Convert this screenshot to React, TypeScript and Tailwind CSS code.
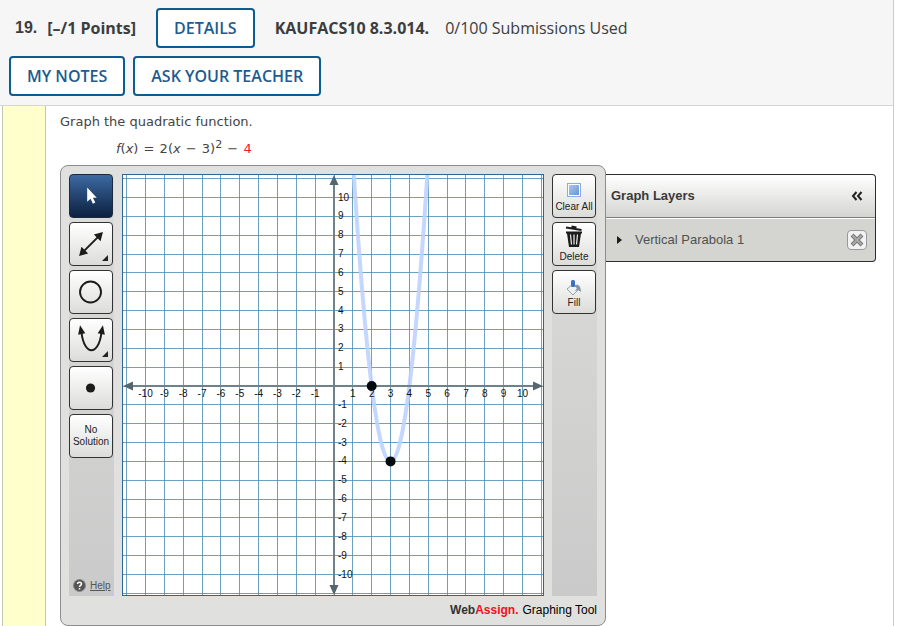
import type { ReactNode } from "react";

const UNIT = 18.85;
const CENTER = 212;
const SIZE = 422;
const px = (v: number) => CENTER + v * UNIT;
const py = (v: number) => CENTER - v * UNIT;
const ticks = Array.from({ length: 23 }, (_, i) => i - 11);
const labels = ticks.filter((t) => t !== 0 && Math.abs(t) <= 10);

function HeaderButton({ children }: { children: ReactNode }) {
  return (
    <button
      type="button"
      className="h-10 rounded border-2 border-[#0b5c91] bg-white px-4 text-base font-semibold text-[#1d5b90]"
    >
      {children}
    </button>
  );
}

function ToolButton({ label, active, children }: { label: string; active?: boolean; children: ReactNode }) {
  return (
    <button
      type="button"
      aria-label={label}
      className={`relative flex h-11 w-11 flex-col items-center justify-center rounded border text-[10px] leading-3 ${
        active
          ? "border-[#1c2a3c] bg-linear-to-b from-[#3d6aa3] to-[#0d2140]"
          : "border-[#333] bg-linear-to-b from-white to-[#dcddda] text-[#222]"
      }`}
    >
      {children}
    </button>
  );
}

function Corner() {
  return (
    <svg className="absolute right-1 bottom-1 h-1.5 w-1.5" viewBox="0 0 6 6" aria-hidden="true">
      <path d="M6 0V6H0Z" fill="#222" />
    </svg>
  );
}

function Plot() {
  return (
    <svg width={SIZE} height={SIZE} className="block shrink-0 bg-white" role="img" aria-label="Coordinate plane">
      <g stroke="#4a88b0" strokeWidth="1" strokeOpacity="0.8">
        {ticks.map((t) => (
          <g key={t}>
            <line x1={Math.floor(px(t)) + 0.5} x2={Math.floor(px(t)) + 0.5} y1="0" y2={SIZE} />
            <line y1={Math.floor(py(t)) + 0.5} y2={Math.floor(py(t)) + 0.5} x1="0" x2={SIZE} />
          </g>
        ))}
      </g>
      <path
        d={`M${px(1)} ${py(12)}Q${px(3)} ${py(-20)} ${px(5)} ${py(12)}`}
        fill="none"
        stroke="#bcd3ff"
        strokeOpacity="0.9"
        strokeWidth="4"
      />
      <g stroke="#6f828b" strokeWidth="2">
        <line x1="6" x2={SIZE - 6} y1={CENTER} y2={CENTER} />
        <line y1="6" y2={SIZE - 6} x1={CENTER} x2={CENTER} />
      </g>
      <g fill="#56666e">
        <path d="M1 212l10-4.500v9z" />
        <path d="M421 212l-10-4.500v9z" />
        <path d="M212 1l-4.500 10h9z" />
        <path d="M212 421l-4.500-10h9z" />
      </g>
      <circle cx={px(2)} cy={py(0)} r="5" fill="#050a0d" />
      <circle cx={px(3)} cy={py(-4)} r="5" fill="#050a0d" />
      <g fontSize="10" fill="#111">
        {labels.map((t) => (
          <g key={t}>
            <text x={px(t)} y={CENTER + 11} textAnchor="middle">
              {t}
            </text>
            <text x={CENTER + 4} y={py(t) + 3}>
              {t}
            </text>
          </g>
        ))}
      </g>
      <rect x="0.5" y="0.5" width={SIZE - 1} height={SIZE - 1} fill="none" stroke="#2f6496" />
    </svg>
  );
}

function Tools() {
  return (
    <div className="flex w-[45px] flex-col gap-1 bg-linear-to-b from-[#dcdcda] to-[#cacaca]">
      <ToolButton label="Select" active>
        <svg width="44" height="44" viewBox="0 0 44 44">
          <path d="M18 13v15l3.500-3 2.500 5 2.500-1.200-2.500-5H28z" fill="#fff" />
        </svg>
      </ToolButton>
      <ToolButton label="Line">
        <svg width="44" height="44" viewBox="0 0 44 44">
          <path d="M14 30L30 14" stroke="#1c1c1c" strokeWidth="2" />
          <path d="M34.500 9.500l-2.500 9.500-7-7zM9.500 34.500l2.500-9.500 7 7z" fill="#1c1c1c" />
        </svg>
        <Corner />
      </ToolButton>
      <ToolButton label="Circle">
        <svg width="44" height="44" viewBox="0 0 44 44">
          <circle cx="21.500" cy="22" r="11" fill="none" stroke="#1c1c1c" strokeWidth="2" />
        </svg>
      </ToolButton>
      <ToolButton label="Parabola">
        <svg width="44" height="44" viewBox="0 0 44 44">
          <path d="M12 14C15 39 30 39 33 14" fill="none" stroke="#1c1c1c" strokeWidth="2" />
          <path d="M10.500 6.500l5.500 8.500-7.500 1.500zM34.500 6.500l-5.500 8.500 7.500 1.500z" fill="#1c1c1c" />
        </svg>
        <Corner />
      </ToolButton>
      <ToolButton label="Point">
        <svg width="44" height="44" viewBox="0 0 44 44">
          <circle cx="21.500" cy="22" r="4.800" fill="#1c1c1c" />
        </svg>
      </ToolButton>
      <ToolButton label="No Solution">
        <span>No</span>
        <span>Solution</span>
      </ToolButton>
      <a href="#help" className="mt-auto flex items-center gap-1 pb-1 pl-1 text-[10px] leading-3 text-[#555]">
        <svg width="13" height="13" viewBox="0 0 13 13" aria-hidden="true">
          <circle cx="6.500" cy="6.500" r="6" fill="#555" stroke="#888" />
          <path d="M4.500 5C4.500 2.500 8.500 2.500 8.500 5C8.500 6.300 6.500 6.300 6.500 8M6.500 9v1.500" fill="none" stroke="#fff" strokeWidth="1.500" />
        </svg>
        <span className="underline">Help</span>
      </a>
    </div>
  );
}

function Actions() {
  return (
    <div className="flex w-[45px] flex-col gap-1 bg-linear-to-b from-[#dcdcda] to-[#cacaca]">
      <ToolButton label="Clear All">
        <svg width="14" height="14" viewBox="0 0 14 14" className="mt-1 mb-1">
          <defs>
            <linearGradient id="sheet" x1="0" y1="0" x2="1" y2="1">
              <stop offset="0" stopColor="#a9c6f0" />
              <stop offset="1" stopColor="#6b94d3" />
            </linearGradient>
          </defs>
          <rect x="0.500" y="0.500" width="13" height="13" fill="#fff" stroke="#8bacdc" />
          <rect x="2" y="2" width="10" height="10" fill="url(#sheet)" />
        </svg>
        <span className="whitespace-nowrap">Clear All</span>
      </ToolButton>
      <ToolButton label="Delete">
        <svg width="18" height="22" viewBox="0 0 18 22" className="mb-1">
          <path d="M1 2.500L16.500 5M6.500 1.500l5 1" fill="none" stroke="#1c1c1c" strokeWidth="2" />
          <path d="M1 6.500h16v2h-1L14 22H4L2 8.500H1z" fill="#1c1c1c" />
          <path d="M5.500 9.500l1 10M9 9.500v10M12.500 9.500l-1 10" stroke="#eee" strokeWidth="1.200" />
        </svg>
        <span>Delete</span>
      </ToolButton>
      <ToolButton label="Fill">
        <svg width="18" height="18" viewBox="0 0 18 18" className="mt-1">
          <path d="M2 10l6-5 6 5-6 6z" fill="#eef0f2" stroke="#9aa0a6" />
          <path d="M9 7c3-3 7-1 7 6l-3-2-3 1 2-3z" fill="#8496ab" />
          <rect x="6" y="1" width="4" height="7" rx="1.500" fill="#3d6fc0" />
        </svg>
        <span>Fill</span>
      </ToolButton>
    </div>
  );
}

function Layers() {
  return (
    <section className="mt-[9px] w-[270px] rounded-r border border-l-0 border-[#2d2d2d] bg-[#d4d5d1] text-[13px]">
      <header className="flex h-[43px] items-center justify-between rounded-tr border-b border-[#7d7f7a] bg-linear-to-b from-white to-[#d4d5d1] pr-3 pl-[5px]">
        <h2 className="font-bold text-[#3a3a3a]">Graph Layers</h2>
        <button type="button" aria-label="Collapse" className="text-[#222]">
          <svg width="12" height="10" viewBox="0 0 12 10">
            <path d="M5.500 1L2 5l3.500 4M10.500 1L7 5l3.500 4" fill="none" stroke="currentColor" strokeWidth="2" />
          </svg>
        </button>
      </header>
      <div className="flex h-[43px] items-center border-t border-white pr-2 pl-[11px] text-[#50524f]">
        <button type="button" className="flex items-center gap-[13px]">
          <svg width="5" height="8" viewBox="0 0 5 8" aria-hidden="true">
            <path d="M0 0l5 4-5 4z" fill="#1c1c1c" />
          </svg>
          Vertical Parabola 1
        </button>
        <button
          type="button"
          aria-label="Remove layer"
          className="ml-auto flex h-5 w-5 items-center justify-center rounded-sm border border-[#999] bg-[#f2f2f2]"
        >
          <svg width="14" height="14" viewBox="0 0 14 14">
            <path d="M2 2l10 10M12 2L2 12" stroke="#777" strokeWidth="4" />
            <path d="M2.500 2.500l9 9M11.500 2.500l-9 9" stroke="#aaa" strokeWidth="2" />
          </svg>
        </button>
      </div>
    </section>
  );
}

export default function App() {
  return (
    <div className="min-h-screen overflow-hidden bg-white pr-1">
      <div className="flex min-h-screen flex-col border-r border-[#ccc]">
        <header className="flex flex-col gap-2 border-b border-[#d5d5d5] bg-[#f6f6f6] px-[9px] pt-2 pb-[9px] font-['Open_Sans',sans-serif] text-base text-[#3d3d3d]">
          <div className="flex items-center pl-1.5">
            <span className="mr-2.5 font-['Liberation_Sans',sans-serif] font-bold">19.</span>
            <span className="mr-5 font-bold">[–/1 Points]</span>
            <HeaderButton>DETAILS</HeaderButton>
            <span className="ml-5 font-bold">KAUFACS10 8.3.014.</span>
            <span className="ml-4">0/100 Submissions Used</span>
          </div>
          <div className="flex gap-2">
            <HeaderButton>MY NOTES</HeaderButton>
            <HeaderButton>ASK YOUR TEACHER</HeaderButton>
          </div>
        </header>
        <div className="flex grow pl-0.5">
          <div className="w-11 shrink-0 border-x border-[#c4c4b4] bg-[#ffffcc]" />
          <main className="grow pl-3.5">
            <div className="font-['DejaVu_Sans',sans-serif] text-[13px] leading-5 text-[#444]">
              <p className="pt-1.5">Graph the quadratic function.</p>
              <p className="mt-[7px] mb-1.5 h-5 pl-14">
                <i>f</i>(<i>x</i>) <span className="mx-px">=</span> 2(<i>x</i> <span className="mx-px">−</span> 3)
                <sup className="text-[11px]">2</sup> <span className="mx-px">−</span>{" "}
                <span className="text-[#e8202a]">4</span>
              </p>
            </div>
            <div className="flex items-start font-['Liberation_Sans',sans-serif]">
              <div className="shrink-0 rounded-lg border border-[#8c8c8c] bg-[#e0e0de] px-2 pt-2">
                <div className="flex gap-2">
                  <Tools />
                  <Plot />
                  <Actions />
                </div>
                <p className="flex h-[29px] items-center justify-end gap-1 pb-0.5 text-xs text-black">
                  <b className="text-[#333]">
                    Web<span className="text-[#f0101c]">Assign.</span>
                  </b>
                  Graphing Tool
                </p>
              </div>
              <Layers />
            </div>
          </main>
        </div>
      </div>
    </div>
  );
}
